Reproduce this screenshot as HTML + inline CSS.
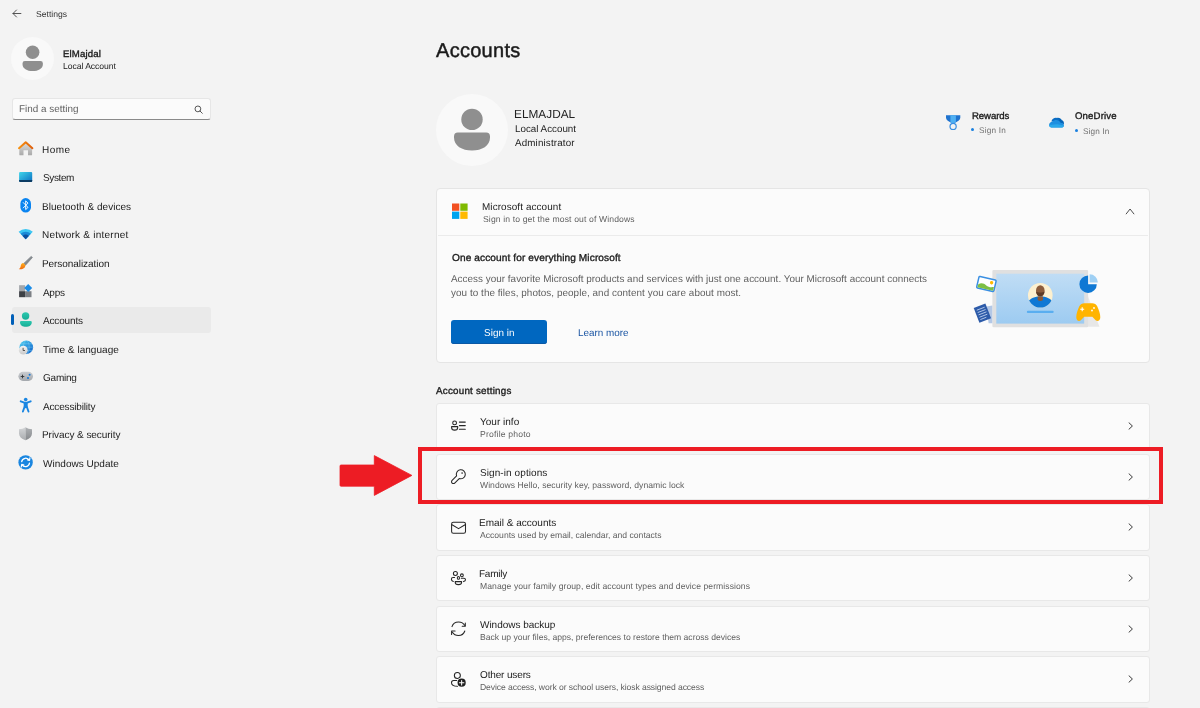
<!DOCTYPE html>
<html><head><meta charset="utf-8"><title>Settings - Accounts</title>
<style>
html,body{margin:0;padding:0;}
body{width:1200px;height:708px;overflow:hidden;position:relative;background:#f3f3f3;font-family:"Liberation Sans",sans-serif;}
.t{position:absolute;white-space:nowrap;text-rendering:geometricPrecision;will-change:transform;}
.r{position:absolute;display:block;}
</style></head><body>
<svg class="r" style="left:12.00px;top:9.00px;" width="10.00" height="9.00" viewBox="0 0 10 9"><path d="M8.9 4.5H1.1M4.5 1L1 4.5L4.5 8" fill="none" stroke="#3a3a3a" stroke-width="0.85" stroke-linecap="round" stroke-linejoin="round"/></svg>
<div class="t" style="left:36.00px;top:10px;font-size:8.6px;line-height:8.6px;color:#333;">Settings</div>
<div class="r" style="left:11.20px;top:36.60px;width:43.00px;height:43.00px;border-radius:50%;background:#f9f9f9;"></div>
<svg class="r" style="left:11.20px;top:36.60px;" width="43.00" height="43.00" viewBox="0 0 43 43"><circle cx="21.6" cy="15.3" r="6.8" fill="#8f8f8f"/><path d="M11.5 26.4a2.4 2.4 0 0 1 2.4-2.4h15.6a2.4 2.4 0 0 1 2.4 2.4v0.5c0 4.8-4.6 7.1-10.2 7.1s-10.2-2.3-10.2-7.1z" fill="#8f8f8f"/></svg>
<div class="t" style="left:63.00px;top:50px;font-size:9.6px;line-height:9.6px;color:#1b1b1b;letter-spacing:0.143px;-webkit-text-stroke:0.35px #1b1b1b;">ElMajdal</div>
<div class="t" style="left:63.00px;top:62px;font-size:8.6px;line-height:8.6px;color:#1b1b1b;letter-spacing:-0.050px;">Local Account</div>
<div class="r" style="left:12.00px;top:98.00px;width:198.50px;height:21.50px;box-sizing:border-box;background:#fbfbfb;border:1px solid #e6e6e6;border-bottom:1px solid #8a8a8a;border-radius:3px;"></div>
<div class="t" style="left:19.40px;top:105px;font-size:9.9px;line-height:9.9px;color:#5f5f5f;letter-spacing:0.008px;">Find a setting</div>
<svg class="r" style="left:193.50px;top:104.50px;" width="9.00" height="9.00" viewBox="0 0 9 9"><circle cx="3.9" cy="3.9" r="2.9" fill="none" stroke="#444" stroke-width="0.9"/><path d="M6 6L8.3 8.3" stroke="#444" stroke-width="0.9" stroke-linecap="round"/></svg>
<div class="r" style="left:11.50px;top:307.00px;width:199.70px;height:25.80px;background:#eaeaea;border-radius:3px;"></div>
<div class="r" style="left:11.40px;top:313.80px;width:2.50px;height:11.50px;background:#005fb8;border-radius:1.5px;"></div>
<div class="t" style="left:42.00px;top:146px;font-size:10px;line-height:10px;color:#1b1b1b;letter-spacing:0.467px;">Home</div>
<div class="t" style="left:43.00px;top:174px;font-size:10px;line-height:10px;color:#1b1b1b;letter-spacing:-0.380px;">System</div>
<div class="t" style="left:42.00px;top:203px;font-size:10px;line-height:10px;color:#1b1b1b;letter-spacing:0.039px;">Bluetooth &amp; devices</div>
<div class="t" style="left:42.00px;top:231px;font-size:10px;line-height:10px;color:#1b1b1b;letter-spacing:0.235px;">Network &amp; internet</div>
<div class="t" style="left:42.00px;top:260px;font-size:10px;line-height:10px;color:#1b1b1b;letter-spacing:-0.064px;">Personalization</div>
<div class="t" style="left:43.00px;top:289px;font-size:10px;line-height:10px;color:#1b1b1b;letter-spacing:-0.300px;">Apps</div>
<div class="t" style="left:43.00px;top:317px;font-size:10px;line-height:10px;color:#1b1b1b;letter-spacing:-0.157px;">Accounts</div>
<div class="t" style="left:43.00px;top:346px;font-size:10px;line-height:10px;color:#1b1b1b;letter-spacing:0.043px;">Time &amp; language</div>
<div class="t" style="left:43.00px;top:374px;font-size:10px;line-height:10px;color:#1b1b1b;letter-spacing:-0.220px;">Gaming</div>
<div class="t" style="left:43.00px;top:403px;font-size:10px;line-height:10px;color:#1b1b1b;letter-spacing:-0.167px;">Accessibility</div>
<div class="t" style="left:42.00px;top:431px;font-size:10px;line-height:10px;color:#1b1b1b;letter-spacing:-0.059px;">Privacy &amp; security</div>
<div class="t" style="left:43.00px;top:460px;font-size:10px;line-height:10px;color:#1b1b1b;letter-spacing:0.023px;">Windows Update</div>
<svg class="r" style="left:17px;top:140px" width="18" height="17" viewBox="17 140 18 17">
<defs><linearGradient id="hg" x1="0" y1="0" x2="0" y2="1"><stop offset="0" stop-color="#dcdcdc"/><stop offset="1" stop-color="#a9a9a9"/></linearGradient>
<linearGradient id="rg" x1="0" y1="0" x2="1" y2="0"><stop offset="0" stop-color="#f7900f"/><stop offset="1" stop-color="#e0600c"/></linearGradient></defs>
<path d="M19.3 147.6L25.7 142.6L32.1 147.6V154.4a0.9 0.9 0 0 1-0.9 0.9H28V150.3H23.5V155.3H20.2a0.9 0.9 0 0 1-0.9-0.9z" fill="url(#hg)"/>
<path d="M19 148.2L25.7 142.3L32.4 148.2" fill="none" stroke="url(#rg)" stroke-width="2" stroke-linecap="round" stroke-linejoin="round"/>
</svg>
<svg class="r" style="left:18px;top:171px" width="15" height="12" viewBox="18 171 15 12">
<defs><linearGradient id="sg" x1="0" y1="0" x2="1" y2="1"><stop offset="0" stop-color="#3fd6ea"/><stop offset="1" stop-color="#0a6fc2"/></linearGradient></defs>
<rect x="19.1" y="171.9" width="13.1" height="10" rx="1" fill="url(#sg)"/>
<path d="M19.1 180H32.2V180.9a1 1 0 0 1-1 1H20.1a1 1 0 0 1-1-1z" fill="#0b3b63"/>
</svg>
<svg class="r" style="left:19px;top:197px" width="14" height="17" viewBox="19 197 14 17">
<rect x="20.4" y="198.1" width="10.6" height="14.5" rx="5.3" fill="#0a84f0"/>
<path d="M23.3 202.6L28 207.4L25.7 209.6V200.9L28 203.1L23.3 207.9" fill="none" stroke="#fff" stroke-width="0.95" stroke-linejoin="round" stroke-linecap="round"/>
</svg>
<svg class="r" style="left:18px;top:228px" width="16" height="12" viewBox="18 228 16 12">
<path d="M18.6 231.7A10.5 10.5 0 0 1 32.8 231.7L25.7 239.2z" fill="#3cc6f2"/>
<path d="M20.6 233.8A7.6 7.6 0 0 1 30.8 233.8L25.7 239.2z" fill="#1b8ad6"/>
<path d="M22.6 235.9A4.6 4.6 0 0 1 28.8 235.9L25.7 239.2z" fill="#0d4f9e"/>
</svg>
<svg class="r" style="left:18px;top:255px" width="16" height="16" viewBox="18 255 16 16">
<defs><linearGradient id="bg1" x1="0" y1="0" x2="1" y2="1"><stop offset="0" stop-color="#9ea3a8"/><stop offset="1" stop-color="#6b7075"/></linearGradient>
<linearGradient id="bg2" x1="0" y1="0" x2="0" y2="1"><stop offset="0" stop-color="#ffae1a"/><stop offset="1" stop-color="#f06a10"/></linearGradient></defs>
<path d="M31.2 256.3L32.5 257.4L25.6 265.2L23.6 263.5z" fill="url(#bg1)" stroke="url(#bg1)" stroke-width="0.6" stroke-linejoin="round"/>
<path d="M23.3 263.1C21.5 263.3 21 264.6 20.6 266.4C20.3 267.8 19.5 268.5 18.7 269.1C20.2 269.6 22.6 269.4 24.1 268.1C25.1 267.2 25.5 266 25.4 265z" fill="url(#bg2)"/>
</svg>
<svg class="r" style="left:18px;top:283px" width="16" height="16" viewBox="18 283 16 16">
<rect x="19.1" y="285.2" width="6" height="6" fill="#a3a7ab"/>
<rect x="19.1" y="291.2" width="6" height="6" fill="#3d4146"/>
<rect x="25.1" y="291.2" width="6.4" height="6" fill="#7c8085"/>
<path d="M28.2 283.9L32.2 287.9L28.2 291.9L24.2 287.9z" fill="#1a8be6"/>
</svg>
<svg class="r" style="left:19px;top:311px" width="14" height="17" viewBox="19 311 14 17">
<defs><linearGradient id="ag" x1="0" y1="0" x2="0" y2="1"><stop offset="0" stop-color="#2dc7ae"/><stop offset="1" stop-color="#16ad96"/></linearGradient></defs>
<circle cx="25.6" cy="316" r="3.7" fill="url(#ag)"/>
<path d="M20 322.2a1.2 1.2 0 0 1 1.2-1.2h9.4a1.2 1.2 0 0 1 1.2 1.2c0 2.9-2.7 4.6-5.9 4.6s-5.9-1.7-5.9-4.6z" fill="url(#ag)"/>
</svg>
<svg class="r" style="left:18px;top:339px" width="16" height="16" viewBox="18 339 16 16">
<defs><linearGradient id="gg" x1="0" y1="0" x2="1" y2="1"><stop offset="0" stop-color="#4fd0f2"/><stop offset="1" stop-color="#0b5cc8"/></linearGradient>
<linearGradient id="cg" x1="0" y1="0" x2="0" y2="1"><stop offset="0" stop-color="#f4f4f4"/><stop offset="1" stop-color="#c8c8c8"/></linearGradient></defs>
<circle cx="26.3" cy="347.2" r="6.8" fill="url(#gg)"/>
<g fill="none" stroke="#9be3f7" stroke-width="0.45" opacity="0.75"><ellipse cx="26.3" cy="347.2" rx="2.9" ry="6.8"/><path d="M19.5 347.2H33.1M20.4 343.8H32.2M20.4 350.6H32.2"/></g>
<circle cx="23.3" cy="350.2" r="4.4" fill="url(#cg)"/>
<path d="M23.1 347.8V350.5H25" fill="none" stroke="#333" stroke-width="0.8"/>
</svg>
<svg class="r" style="left:18px;top:371px" width="16" height="11" viewBox="18 371 16 11">
<defs><linearGradient id="gpg" x1="0" y1="0" x2="0" y2="1"><stop offset="0" stop-color="#c9ccd0"/><stop offset="1" stop-color="#a4a8ad"/></linearGradient></defs>
<rect x="18.4" y="371.8" width="14.6" height="9.1" rx="4.55" fill="url(#gpg)"/>
<path d="M22.5 374.7V378.3M20.7 376.5H24.3" stroke="#2e3236" stroke-width="0.9"/>
<circle cx="29.6" cy="374.8" r="1" fill="#1277d8"/>
<circle cx="28" cy="378.1" r="1" fill="#1277d8"/>
</svg>
<svg class="r" style="left:19px;top:397px" width="14" height="17" viewBox="19 397 14 17">
<circle cx="25.7" cy="399.6" r="1.8" fill="#1a86e2"/>
<path d="M20.7 401.3L25.7 403.2L30.7 401.3M24.5 407L22.9 411.5M26.9 407L28.5 411.5" fill="none" stroke="#1a86e2" stroke-width="1.9" stroke-linecap="round" stroke-linejoin="round"/>
<path d="M23.7 402.5H27.7V406.6C27.7 407.6 26.9 408.3 25.7 408.3C24.5 408.3 23.7 407.6 23.7 406.6z" fill="#1a86e2"/>
</svg>
<svg class="r" style="left:18px;top:426px" width="16" height="16" viewBox="18 426 16 16">
<defs><linearGradient id="shl" x1="0" y1="0" x2="0" y2="1"><stop offset="0" stop-color="#d3d5d7"/><stop offset="1" stop-color="#a9acaf"/></linearGradient><linearGradient id="shr" x1="0" y1="0" x2="0" y2="1"><stop offset="0" stop-color="#aeb1b4"/><stop offset="1" stop-color="#86898c"/></linearGradient></defs>
<path d="M25.5 427.3C23.6 428.6 21.5 429.1 19 429.2V433.5C19 436.5 21.3 438.8 25.5 440.3z" fill="url(#shl)"/>
<path d="M25.5 427.3C27.4 428.6 29.5 429.1 32 429.2V433.5C32 436.5 29.7 438.8 25.5 440.3z" fill="url(#shr)"/>
</svg>
<svg class="r" style="left:18px;top:454px" width="16" height="17" viewBox="18 454 16 17">
<circle cx="25.6" cy="462.4" r="7.2" fill="#1a86e0"/>
<path d="M21.7 461.6A4 4 0 0 1 29.2 460.4M29.5 463.2A4 4 0 0 1 22 464.4" fill="none" stroke="#fff" stroke-width="1.25" stroke-linecap="round"/>
<path d="M27.4 459.9L29.6 460.1L29.9 457.9M23.8 464.9L21.6 464.7L21.3 466.9" fill="none" stroke="#fff" stroke-width="1.15" stroke-linecap="round" stroke-linejoin="round"/>
</svg>

<div class="t" style="left:436.25px;top:41px;font-size:20px;line-height:20px;color:#1a1a1a;letter-spacing:0.286px;-webkit-text-stroke:0.45px #1a1a1a;">Accounts</div>
<div class="r" style="left:435.90px;top:94.00px;width:72.00px;height:72.00px;border-radius:50%;background:#f9f9f9;"></div>
<svg class="r" style="left:435.90px;top:94.00px;" width="72.00" height="72.00" viewBox="0 0 72 72"><circle cx="36" cy="25.4" r="10.7" fill="#8f8f8f"/><path d="M18 42.4a3.8 3.8 0 0 1 3.8-3.8h28.4a3.8 3.8 0 0 1 3.8 3.8v1c0 8.4-8 13-18 13s-18-4.6-18-13z" fill="#8f8f8f"/></svg>
<div class="t" style="left:514.00px;top:109px;font-size:11.8px;line-height:11.8px;color:#222;letter-spacing:0.029px;">ELMAJDAL</div>
<div class="t" style="left:515.00px;top:125px;font-size:9.8px;line-height:9.8px;color:#222;">Local Account</div>
<div class="t" style="left:515.00px;top:139px;font-size:9.8px;line-height:9.8px;color:#222;letter-spacing:0.150px;">Administrator</div>
<div class="t" style="left:971.90px;top:112px;font-size:9.6px;line-height:9.6px;color:#1b1b1b;letter-spacing:-0.083px;-webkit-text-stroke:0.35px #1b1b1b;">Rewards</div>
<div class="r" style="left:971.30px;top:128.30px;width:3.20px;height:3.20px;border-radius:50%;background:#1a80e0;"></div>
<div class="t" style="left:978.70px;top:127px;font-size:8.2px;line-height:8.2px;color:#6f6f6f;letter-spacing:0.217px;">Sign In</div>
<div class="t" style="left:1075.30px;top:112px;font-size:9.6px;line-height:9.6px;color:#1b1b1b;letter-spacing:0.143px;-webkit-text-stroke:0.35px #1b1b1b;">OneDrive</div>
<div class="r" style="left:1075.10px;top:128.60px;width:3.20px;height:3.20px;border-radius:50%;background:#1a80e0;"></div>
<div class="t" style="left:1082.60px;top:128px;font-size:8.2px;line-height:8.2px;color:#6f6f6f;letter-spacing:0.117px;">Sign In</div>
<svg class="r" style="left:940px;top:110px" width="130" height="25" viewBox="940 110 130 25">
<defs><clipPath id="rib"><path d="M946 115.2H960.3V117.8C960.3 120 957.9 121.6 955.6 122.4L953.15 123.3L950.7 122.4C948.4 121.6 946 120 946 117.8z"/></clipPath></defs>
<g clip-path="url(#rib)"><rect x="945" y="114" width="17" height="10" fill="#1f73cf"/><rect x="950.4" y="114" width="5.5" height="10" fill="#4fb0f2"/></g>
<circle cx="953.1" cy="126.4" r="3.1" fill="none" stroke="#3a8ee0" stroke-width="1.2"/>
<g transform="translate(-0.8 0)"><path d="M1053.9 122.3C1054.5 119.6 1056.5 117.8 1058.8 117.8C1060.6 117.8 1062 118.8 1062.7 120.3C1063.9 120.6 1064.7 121.7 1064.7 123.1L1064.7 124.8C1063.4 123.5 1061.6 122.7 1059.8 122.7z" fill="#0364b8"/>
<path d="M1052.2 121.4C1052.8 119.2 1054.6 117.8 1056.7 117.8C1058.3 117.8 1059.7 118.6 1060.4 120C1059.4 120.2 1058.4 120.7 1057.6 121.4z" fill="#0a6dc4"/>
<path d="M1049.9 125.1C1049.9 123.1 1051.3 121.6 1053.2 121.4C1054.2 120.4 1055.6 119.9 1057 119.9C1059 119.9 1060.7 121 1061.4 122.7C1063.3 122.8 1064.7 124.1 1064.7 125.6C1064.7 126.6 1064 127.5 1062.9 127.5H1052.3C1051 127.5 1049.9 126.4 1049.9 125.1z" fill="#1d8fe0"/>
<path d="M1049.9 125.1C1049.9 126.4 1051 127.5 1052.3 127.5H1062.9C1064 127.5 1064.7 126.6 1064.7 125.6L1058 124.2z" fill="#2aa8ea"/>
</g></svg>

<div class="r" style="left:436.00px;top:187.60px;width:713.50px;height:175.00px;box-sizing:border-box;background:#fbfbfb;border:1px solid #e5e5e5;border-radius:4px;"></div>
<div class="r" style="left:437.80px;top:234.70px;width:710.60px;height:1.00px;background:#ebebeb;"></div>
<div class="t" style="left:481.80px;top:203px;font-size:9.9px;line-height:9.9px;color:#1b1b1b;letter-spacing:0.112px;">Microsoft account</div>
<div class="t" style="left:482.80px;top:215px;font-size:8.6px;line-height:8.6px;color:#5f5f5f;letter-spacing:0.135px;">Sign in to get the most out of Windows</div>
<div class="t" style="left:451.50px;top:254px;font-size:10.1px;line-height:10.1px;color:#1b1b1b;letter-spacing:0.106px;-webkit-text-stroke:0.35px #1b1b1b;">One account for everything Microsoft</div>
<div class="t" style="left:451.40px;top:275px;font-size:9.9px;line-height:9.9px;color:#5f5f5f;letter-spacing:0.026px;">Access your favorite Microsoft products and services with just one account. Your Microsoft account connects</div>
<div class="t" style="left:451.40px;top:289px;font-size:9.9px;line-height:9.9px;color:#5f5f5f;letter-spacing:0.062px;">you to the files, photos, people, and content you care about most.</div>
<div class="r" style="left:451.00px;top:320.40px;width:96.40px;height:23.40px;background:#0067c0;border-radius:3px;box-shadow:inset 0 -1px 0 #0a58a5;"></div>
<div class="t" style="left:484.00px;top:329px;font-size:9.9px;line-height:9.9px;color:#ffffff;letter-spacing:0.050px;">Sign in</div>
<div class="t" style="left:577.50px;top:329px;font-size:9.9px;line-height:9.9px;color:#1a55a3;">Learn more</div>
<svg class="r" style="left:450px;top:200px" width="20" height="21" viewBox="450 200 20 21">
<rect x="452" y="203.5" width="7.3" height="7.3" fill="#f25022"/>
<rect x="460.3" y="203.5" width="7.3" height="7.3" fill="#7fba00"/>
<rect x="452" y="211.6" width="7.3" height="7.3" fill="#00a4ef"/>
<rect x="460.3" y="211.6" width="7.3" height="7.3" fill="#ffb900"/>
</svg>
<svg class="r" style="left:1124px;top:206px" width="12" height="10" viewBox="1124 206 12 10">
<path d="M1126.2 213.9L1130.05 209L1133.9 213.9" fill="none" stroke="#444" stroke-width="0.95" stroke-linecap="round" stroke-linejoin="round"/>
</svg>
<svg class="r" style="left:965px;top:262px" width="140" height="70" viewBox="965 262 140 70">
<defs>
<linearGradient id="scr" x1="0" y1="0" x2="0" y2="1"><stop offset="0" stop-color="#c0ddf5"/><stop offset="1" stop-color="#9dcbf1"/></linearGradient>
<clipPath id="avc"><circle cx="1040.3" cy="295.3" r="12.3"/></clipPath>
</defs>
<path d="M1086 291L1099.5 326.8H1086z" fill="#e7e7e7"/>
<rect x="992.4" y="269.9" width="95.7" height="57.4" rx="1.2" fill="#e0e0e0"/>
<rect x="996.3" y="273.7" width="87.9" height="49.9" fill="url(#scr)"/>
<g clip-path="url(#avc)">
<rect x="1026" y="282" width="30" height="30" fill="#fdf0cf"/>
<path d="M1026 310C1026 300 1032 296.5 1040.3 296.5C1048.6 296.5 1054.6 300 1054.6 310z" fill="#0f78d4"/>
<path d="M1037.6 296.4H1043V299.3C1043 300.3 1042 301 1040.3 301C1038.6 301 1037.6 300.3 1037.6 299.3z" fill="#8a5a3a"/>
</g>
<ellipse cx="1040.3" cy="290.6" rx="4.3" ry="5.3" fill="#8c5c3b"/>
<path d="M1036 291.2C1036.2 294.8 1038 296.6 1040.3 296.6C1042.6 296.6 1044.4 294.8 1044.6 291.2C1043.4 292.3 1042 292.6 1040.3 292.6C1038.6 292.6 1037.2 292.3 1036 291.2z" fill="#5e3b26"/>
<rect x="1026.8" y="310.8" width="26.9" height="2.3" rx="1.15" fill="#5aaef0"/>
<g transform="rotate(13 986.4 284)">
<rect x="977.6" y="278.2" width="17.6" height="11.6" rx="1" fill="#fff" stroke="#3a8fe2" stroke-width="1.5"/>
<path d="M978.4 286.4C980.6 284 983.6 283.6 986.6 285.4C989 286.8 991.6 286.2 994.4 285.2V289.2H978.4z" fill="#7dbf45"/>
<circle cx="991.2" cy="281.6" r="1.7" fill="#ffb900"/>
</g>
<path d="M986.5 306.5L992.3 305.6V323.2L988.6 323.2z" fill="#b4c8e6"/>
<g transform="rotate(-21 982.4 313.1)">
<rect x="976.15" y="305.15" width="12.5" height="15.9" fill="#2d5ba9"/>
<path d="M978.2 308.4H986.6M978.2 310.9H986.6M978.2 313.4H986.6M978.2 315.9H986.6M978.2 318.4H984.6" stroke="#d6e4f8" stroke-width="0.7"/>
</g>
<path d="M1088.1 284.2V275.5A8.7 8.7 0 1 0 1096.8 284.2z" fill="#0f78d4"/>
<path d="M1089.6 282.6V274.3A8.3 8.3 0 0 1 1097.9 282.6z" fill="#9fd0f4"/>
<path d="M1079.3 306.2C1080.3 304.3 1082.2 303.3 1084.3 303.3H1092.2C1094.4 303.3 1096.2 304.3 1097.2 306.2C1098.8 309.5 1100.3 313.8 1100.3 317.2C1100.3 319.4 1099 320.9 1097.4 320.9C1095.3 320.9 1094 318.3 1092.3 316.8H1084.2C1082.5 318.3 1081.2 320.9 1079.1 320.9C1077.5 320.9 1076.3 319.4 1076.3 317.2C1076.3 313.8 1077.7 309.5 1079.3 306.2z" fill="#ffb400"/>
<path d="M1082.2 307.3V311.3M1080.2 309.3H1084.2" stroke="#fff" stroke-width="1.1"/>
<circle cx="1094" cy="308" r="0.9" fill="#fff"/><circle cx="1092" cy="310.5" r="0.9" fill="#fff"/>
</svg>


<div class="t" style="left:436.40px;top:387px;font-size:9.8px;line-height:9.8px;color:#1b1b1b;letter-spacing:0.233px;-webkit-text-stroke:0.35px #1b1b1b;">Account settings</div>
<div class="r" style="left:436.00px;top:403.00px;width:713.50px;height:46.50px;box-sizing:border-box;background:#fbfbfb;border:1px solid #e8e8e8;border-radius:3px;"></div>
<div class="t" style="left:479.80px;top:418px;font-size:10px;line-height:10px;color:#1b1b1b;letter-spacing:0.013px;">Your info</div>
<div class="t" style="left:479.80px;top:430px;font-size:8.6px;line-height:8.6px;color:#5f5f5f;letter-spacing:0.192px;">Profile photo</div>
<svg class="r" style="left:1127.50px;top:422.00px;" width="6.00" height="8.00" viewBox="0 0 6 8"><path d="M1 0.8L4.4 4L1 7.2" fill="none" stroke="#3a3a3a" stroke-width="1" stroke-linecap="round" stroke-linejoin="round"/></svg>
<div class="r" style="left:436.00px;top:453.65px;width:713.50px;height:46.50px;box-sizing:border-box;background:#fbfbfb;border:1px solid #e8e8e8;border-radius:3px;"></div>
<div class="t" style="left:479.80px;top:469px;font-size:10px;line-height:10px;color:#1b1b1b;letter-spacing:0.086px;">Sign-in options</div>
<div class="t" style="left:479.80px;top:481px;font-size:8.6px;line-height:8.6px;color:#5f5f5f;letter-spacing:0.040px;">Windows Hello, security key, password, dynamic lock</div>
<svg class="r" style="left:1127.50px;top:472.65px;" width="6.00" height="8.00" viewBox="0 0 6 8"><path d="M1 0.8L4.4 4L1 7.2" fill="none" stroke="#3a3a3a" stroke-width="1" stroke-linecap="round" stroke-linejoin="round"/></svg>
<div class="r" style="left:436.00px;top:504.30px;width:713.50px;height:46.50px;box-sizing:border-box;background:#fbfbfb;border:1px solid #e8e8e8;border-radius:3px;"></div>
<div class="t" style="left:478.80px;top:519px;font-size:10px;line-height:10px;color:#1b1b1b;">Email &amp; accounts</div>
<div class="t" style="left:479.80px;top:531px;font-size:8.6px;line-height:8.6px;color:#5f5f5f;">Accounts used by email, calendar, and contacts</div>
<svg class="r" style="left:1127.50px;top:523.30px;" width="6.00" height="8.00" viewBox="0 0 6 8"><path d="M1 0.8L4.4 4L1 7.2" fill="none" stroke="#3a3a3a" stroke-width="1" stroke-linecap="round" stroke-linejoin="round"/></svg>
<div class="r" style="left:436.00px;top:554.95px;width:713.50px;height:46.50px;box-sizing:border-box;background:#fbfbfb;border:1px solid #e8e8e8;border-radius:3px;"></div>
<div class="t" style="left:478.80px;top:570px;font-size:10px;line-height:10px;color:#1b1b1b;letter-spacing:-0.260px;">Family</div>
<div class="t" style="left:479.80px;top:582px;font-size:8.6px;line-height:8.6px;color:#5f5f5f;letter-spacing:0.067px;">Manage your family group, edit account types and device permissions</div>
<svg class="r" style="left:1127.50px;top:573.95px;" width="6.00" height="8.00" viewBox="0 0 6 8"><path d="M1 0.8L4.4 4L1 7.2" fill="none" stroke="#3a3a3a" stroke-width="1" stroke-linecap="round" stroke-linejoin="round"/></svg>
<div class="r" style="left:436.00px;top:605.60px;width:713.50px;height:46.50px;box-sizing:border-box;background:#fbfbfb;border:1px solid #e8e8e8;border-radius:3px;"></div>
<div class="t" style="left:479.80px;top:621px;font-size:10px;line-height:10px;color:#1b1b1b;letter-spacing:-0.023px;">Windows backup</div>
<div class="t" style="left:479.80px;top:633px;font-size:8.6px;line-height:8.6px;color:#5f5f5f;letter-spacing:-0.007px;">Back up your files, apps, preferences to restore them across devices</div>
<svg class="r" style="left:1127.50px;top:624.60px;" width="6.00" height="8.00" viewBox="0 0 6 8"><path d="M1 0.8L4.4 4L1 7.2" fill="none" stroke="#3a3a3a" stroke-width="1" stroke-linecap="round" stroke-linejoin="round"/></svg>
<div class="r" style="left:436.00px;top:656.25px;width:713.50px;height:46.50px;box-sizing:border-box;background:#fbfbfb;border:1px solid #e8e8e8;border-radius:3px;"></div>
<div class="t" style="left:479.80px;top:671px;font-size:10px;line-height:10px;color:#1b1b1b;letter-spacing:-0.140px;">Other users</div>
<div class="t" style="left:479.80px;top:683px;font-size:8.6px;line-height:8.6px;color:#5f5f5f;letter-spacing:-0.088px;">Device access, work or school users, kiosk assigned access</div>
<svg class="r" style="left:1127.50px;top:675.25px;" width="6.00" height="8.00" viewBox="0 0 6 8"><path d="M1 0.8L4.4 4L1 7.2" fill="none" stroke="#3a3a3a" stroke-width="1" stroke-linecap="round" stroke-linejoin="round"/></svg>
<div class="r" style="left:436.00px;top:706.90px;width:713.50px;height:46.50px;box-sizing:border-box;background:#fbfbfb;border:1px solid #e8e8e8;border-radius:3px;"></div>
<svg class="r" style="left:0;top:0" width="1200" height="708" viewBox="0 0 1200 708">
<g fill="none" stroke="#262626" stroke-width="1.05" stroke-linecap="round" stroke-linejoin="round">
<!-- your info -->
<circle cx="454.6" cy="422.9" r="1.9"/>
<path d="M451.6 426.6H457.7V427.4C457.7 429 456.4 430.1 454.65 430.1C452.9 430.1 451.6 429 451.6 427.4z"/>
<path d="M459.4 422.1H465.3M459.4 425.6H465.3M459.4 429.2H465.3"/>
<!-- key -->
<path d="M456.59 475.89L452.09 480.39A1.85 1.85 0 0 0 454.71 483.01L459.21 478.51A4.5 4.5 0 1 0 456.59 475.89z"/>
<!-- mail -->
<rect x="451.6" y="522.3" width="13.9" height="11" rx="1.8"/>
<path d="M452 524.8L458.55 528.6L465.1 524.8"/>
<!-- family -->
<circle cx="455.4" cy="573.5" r="2"/>
<circle cx="461.9" cy="575.3" r="1.4"/>
<ellipse cx="458.4" cy="577.9" rx="1.1" ry="1.4"/>
<path d="M454.6 577.4H453.1C452 577.4 451.4 578.3 451.4 579.3C451.4 580.4 452.2 581.2 453.3 581.5"/>
<path d="M461.3 578.2H463.8C464.8 578.2 465.5 578.9 465.5 579.8C465.5 580.7 464.6 581.4 463.5 581.6"/>
<path d="M455.2 581.6H461.6V582.2C461.6 583.8 460.4 584.6 458.4 584.6C456.4 584.6 455.2 583.8 455.2 582.2z"/>
<!-- sync -->
<path d="M452 626.6C452.9 623.6 455.5 621.9 458.6 621.9C461.4 621.9 463.6 623.3 464.9 625.6"/>
<path d="M465.3 623.1V626.2H462.2"/>
<path d="M464.8 631C463.9 633.8 461.4 635.5 458.4 635.5C455.8 635.5 453.7 634.3 452.4 632.2"/>
<path d="M451.6 634.4V631H455.1"/>
<!-- other users -->
<circle cx="457.35" cy="675.4" r="3"/>
<path d="M457.8 680.5H453.6C452.3 680.5 451.5 681.5 451.5 682.7C451.5 684.8 453.4 686.3 457.6 686.3"/>
</g>
<circle cx="462.1" cy="473.1" r="0.8" fill="#262626"/>
<circle cx="461.65" cy="682.65" r="5" fill="#fbfbfb"/><circle cx="461.65" cy="682.65" r="4.1" fill="#1f1f1f"/>
<path d="M461.65 680.4V684.9M459.4 682.65H463.9" stroke="#fff" stroke-width="1.05" stroke-linecap="round"/>
</svg>

<div class="r" style="left:418.00px;top:447.00px;width:745.00px;height:57.00px;box-sizing:border-box;border:4px solid #ed1c24;"></div>
<svg class="r" style="left:339.00px;top:453.00px;" width="75.00" height="45.00" viewBox="0 0 75 45"><path d="M2 12H35.3V2.6L72.9 22.4L35.3 42.4V33.2H2a1 1 0 0 1-1-1V13a1 1 0 0 1 1-1z" fill="#ed1c24" stroke="#ed1c24" stroke-width="0.8" stroke-linejoin="round"/></svg>
</body></html>
